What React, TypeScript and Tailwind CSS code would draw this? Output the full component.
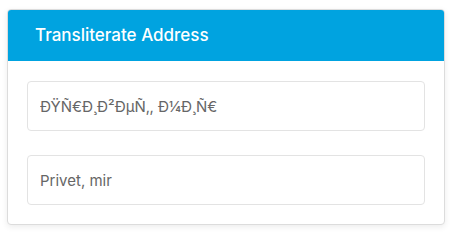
export default function App() {
  return (
    <div
      className="min-h-screen bg-white pt-[9px] pl-[7px] pr-[9px]"
      style={{ fontFamily: 'Inter, "Noto Sans", sans-serif' }}
    >
      <div className="w-[438px] overflow-hidden rounded-[4px] border border-[#dcdcdc] bg-white shadow-[0_2px_6px_rgba(0,0,0,0.08)]">
        <div className="flex h-[51px] items-center bg-[#00a3e0] px-[27px]">
          <h1 className="text-[17px] font-medium text-white">Transliterate Address</h1>
        </div>
        <div className="flex flex-col gap-[24px] px-[19px] pt-[20px] pb-[19px]">
          <input
            readOnly
            value="ÐŸÑ€Ð¸Ð²ÐµÑ‚, Ð¼Ð¸Ñ€"
            className="h-[50px] w-full rounded-[4px] border border-[#e3e3e3] px-[12px] text-[15px] text-[#666] outline-none"
          />
          <input
            readOnly
            value="Privet, mir"
            className="h-[50px] w-full rounded-[4px] border border-[#e3e3e3] px-[12px] text-[15px] text-[#666] outline-none"
          />
        </div>
      </div>
    </div>
  );
}
